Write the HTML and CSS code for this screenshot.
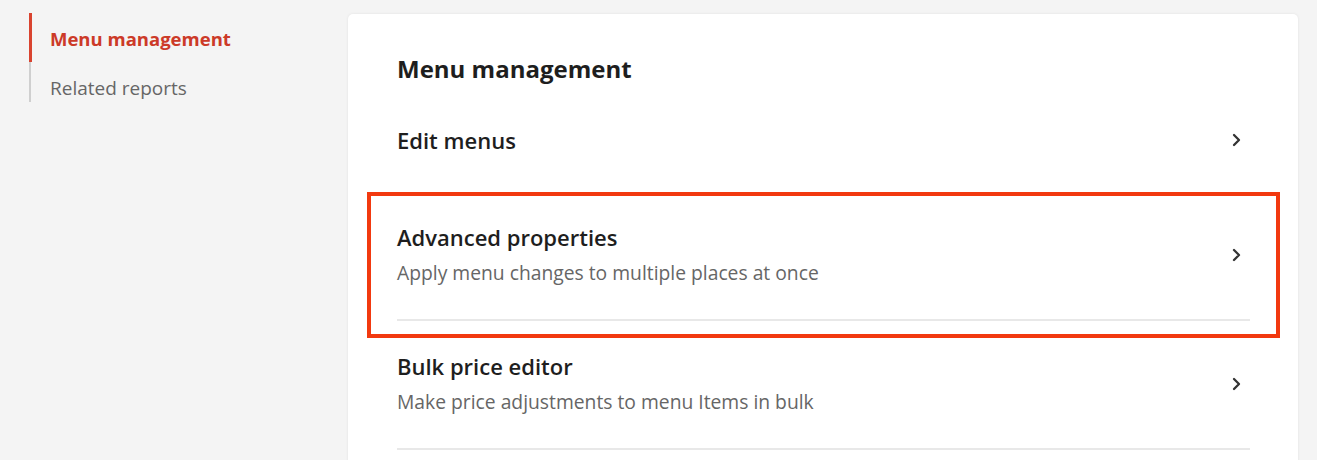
FILE: index.html
```html
<!DOCTYPE html>
<html lang="en">
<head>
<meta charset="utf-8">
<title>Menu management</title>
<link rel="stylesheet" href="styles.css">
</head>
<body>
<div class="page">
  <nav class="sidenav">
    <ul class="sidenav-list">
      <li class="sidenav-item is-active">Menu management</li>
      <li class="sidenav-item">Related reports</li>
    </ul>
  </nav>
  <main class="card">
    <h1 class="card-title">Menu management</h1>
    <div class="row row--simple">
      <div class="row-text">
        <div class="row-title">Edit menus</div>
      </div>
      <svg class="chevron" width="9" height="14" viewBox="0 0 9 14"><path d="M2 2 L7 7 L2 12" fill="none" stroke="#333" stroke-width="2.3" stroke-linecap="round" stroke-linejoin="round"/></svg>
    </div>
    <div class="row">
      <div class="row-text">
        <div class="row-title">Advanced properties</div>
        <div class="row-sub">Apply menu changes to multiple places at once</div>
      </div>
      <svg class="chevron" width="9" height="14" viewBox="0 0 9 14"><path d="M2 2 L7 7 L2 12" fill="none" stroke="#333" stroke-width="2.3" stroke-linecap="round" stroke-linejoin="round"/></svg>
    </div>
    <div class="row">
      <div class="row-text">
        <div class="row-title">Bulk price editor</div>
        <div class="row-sub">Make price adjustments to menu Items in bulk</div>
      </div>
      <svg class="chevron" width="9" height="14" viewBox="0 0 9 14"><path d="M2 2 L7 7 L2 12" fill="none" stroke="#333" stroke-width="2.3" stroke-linecap="round" stroke-linejoin="round"/></svg>
    </div>
    <div class="highlight"></div>
  </main>
</div>
</body>
</html>
```
FILE: styles.css
```css
* { box-sizing: border-box; }
html, body { margin: 0; padding: 0; }
body {
  background: #f4f4f4;
  font-family: "Open Sans", "Noto Sans", sans-serif;
  color: #222;
  overflow: hidden;
}
.page {
  display: flex;
  align-items: flex-start;
  padding: 13px 0 0 29px;
}
.sidenav {
  width: 319px;
  flex: none;
}
.sidenav-list {
  list-style: none;
  margin: 0;
  padding: 0;
}
.sidenav-item {
  border-left: 2px solid #cfcfcf;
  padding: 13px 0 1px 19px;
  font-size: 19px;
  line-height: 26px;
  color: #666;
}
.sidenav-item.is-active {
  border-left: 3px solid #d9432f;
  padding: 13px 0 10px 18px;
  color: #cc3a28;
  font-weight: 700;
  font-size: 18.5px;
}
.card {
  position: relative;
  width: 950px;
  flex: none;
  margin-top: 1px;
  min-height: 480px;
  background: #fff;
  border-radius: 5px;
  box-shadow: 0 0 3px rgba(0, 0, 0, 0.08);
  padding: 40px 48px 0 49px;
}
.card-title {
  margin: 0 0 11px;
  font-size: 24px;
  line-height: 30px;
  font-weight: 700;
  color: #1e1e1e;
}
.row {
  display: flex;
  align-items: center;
  justify-content: space-between;
  padding: 31px 0 33px;
  border-bottom: 2px solid #e8e8e8;
}
.row--simple {
  padding-bottom: 38px;
  border-bottom: none;
}
.row-title {
  font-size: 22px;
  line-height: 28px;
  font-weight: 600;
  color: #1e1e1e;
}
.row-sub {
  margin-top: 9px;
  font-size: 19.3px;
  line-height: 26px;
  color: #666;
}
.chevron {
  flex: none;
  margin-right: 9px;
}
.highlight {
  position: absolute;
  left: 19px;
  top: 178px;
  width: 913px;
  height: 146px;
  border: 4px solid #f2390f;
  pointer-events: none;
}
```
